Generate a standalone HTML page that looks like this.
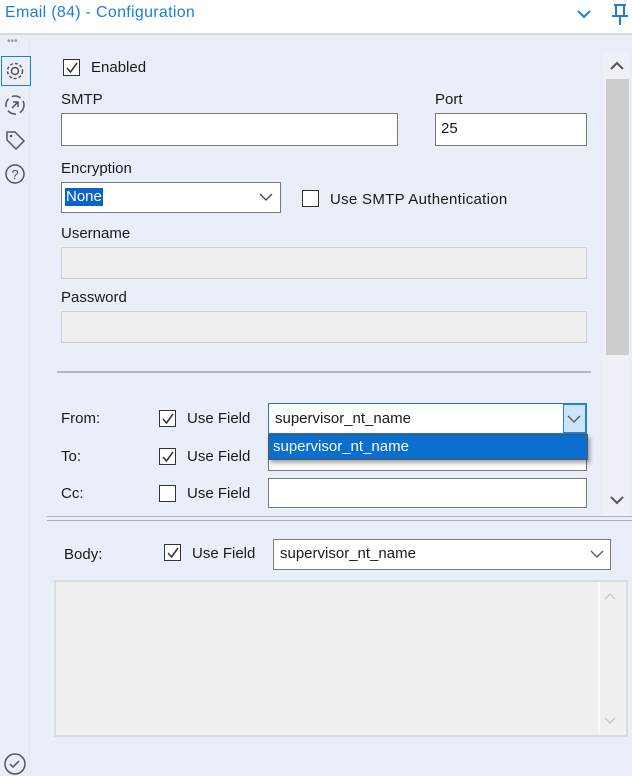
<!DOCTYPE html>
<html><head><style>
*{box-sizing:border-box;margin:0;padding:0}
body{width:632px;height:772px;background:#e9eef8;font-family:"Liberation Sans",sans-serif;font-size:15px;color:#1a1a1a;position:relative;overflow:hidden}
.a{position:absolute}
.t{position:absolute;white-space:nowrap;line-height:18px}
.in{position:absolute;background:#fff;border:1px solid #7a7a7a}
.dis{position:absolute;background:#f0f0f0;border:1px solid #cfcfcf}
.cb{position:absolute;width:17px;height:17px;border:1px solid #333;background:#fff}
.cb svg{position:absolute;left:1px;top:1px}
</style></head><body>
<div class="a" style="left:0;top:0;width:632px;height:35px;background:#fff;border-bottom:2px solid #d6d9de"></div>
<div class="t" style="left:5px;top:4px;color:#1c7ed6;font-size:16px;letter-spacing:0.3px">Email (84) - Configuration</div>
<svg class="a" style="left:576px;top:8px" width="16" height="12"><path d="M2 3l6 6 6-6" stroke="#1c7ed6" stroke-width="2" fill="none"/></svg>
<svg class="a" style="left:610px;top:3px" width="20" height="24"><path d="M4 2h12M6 2v10M14 2v10M2 13h16M10 13v9" stroke="#1c7ed6" stroke-width="2" fill="none"/></svg>
<div class="a" style="left:0;top:37px;width:30px;height:735px;background:#e9eef8;border-right:1px solid #e2e7f1"></div>
<div class="t" style="left:7px;top:37px;color:#999;font-size:10px;line-height:10px">•••</div>
<div class="a" style="left:1px;top:56px;width:30px;height:30px;border:1px solid #1c7ed6"></div>
<svg class="a" style="left:4px;top:60px" width="22" height="22"><circle cx="11" cy="11" r="3.5" stroke="#555" stroke-width="1.5" fill="none"/><circle cx="11" cy="11" r="7.5" stroke="#555" stroke-width="1.5" fill="none" stroke-dasharray="3 2"/></svg>
<svg class="a" style="left:4px;top:94px" width="22" height="22"><circle cx="11" cy="11" r="9" stroke="#555" stroke-width="1.5" fill="none" stroke-dasharray="9 4"/><path d="M8 14l6-6M9 8h5v5" stroke="#555" stroke-width="1.5" fill="none"/></svg>
<svg class="a" style="left:4px;top:129px" width="22" height="22"><path d="M3 3h8l9 9-8 8-9-9z" stroke="#555" stroke-width="1.5" fill="none"/><circle cx="7" cy="7" r="1.3" fill="#555"/></svg>
<svg class="a" style="left:4px;top:163px" width="22" height="22"><circle cx="11" cy="11" r="9" stroke="#555" stroke-width="1.5" fill="none"/><text x="11" y="16" text-anchor="middle" font-size="13" font-family="Liberation Sans" fill="#555">?</text></svg>
<svg class="a" style="left:3px;top:752px" width="24" height="24"><circle cx="12" cy="12" r="10" stroke="#555" stroke-width="1.5" fill="none"/><path d="M7 12l3 3 6-6" stroke="#555" stroke-width="1.5" fill="none"/></svg>
<div class="cb" style="left:63px;top:59px"><svg width="14" height="14"><path d="M2 7l3.5 4L12 2" stroke="#333" stroke-width="1.5" fill="none"/></svg></div>
<div class="t" style="left:91px;top:59px">Enabled</div>
<div class="t" style="left:61px;top:91px">SMTP</div>
<div class="in" style="left:61px;top:113px;width:337px;height:33px"></div>
<div class="t" style="left:435px;top:91px">Port</div>
<div class="in" style="left:435px;top:113px;width:152px;height:33px"></div>
<div class="t" style="left:441px;top:120px">25</div>
<div class="t" style="left:61px;top:160px">Encryption</div>
<div class="in" style="left:61px;top:182px;width:220px;height:31px"></div>
<div class="t" style="left:65px;top:188px;background:#0a64c8;color:#fff;padding:0 1px">None</div>
<svg class="a" style="left:259px;top:192px" width="14" height="10"><path d="M1 2l6 6 6-6" stroke="#444" stroke-width="1.3" fill="none"/></svg>
<div class="cb" style="left:302px;top:190px"></div>
<div class="t" style="left:330px;top:191px;letter-spacing:0.3px">Use SMTP Authentication</div>
<div class="t" style="left:61px;top:225px">Username</div>
<div class="dis" style="left:61px;top:247px;width:526px;height:32px"></div>
<div class="t" style="left:61px;top:289px">Password</div>
<div class="dis" style="left:61px;top:311px;width:526px;height:32px"></div>
<div class="a" style="left:57px;top:371px;width:534px;height:2px;background:#b8b8b8"></div>
<div class="a" style="left:603px;top:53px;width:26px;height:462px;background:#eef1f8"></div>
<div class="a" style="left:606px;top:79px;width:23px;height:276px;background:#cdcdcd"></div>
<svg class="a" style="left:609px;top:60px" width="16" height="12"><path d="M2 9l6-6 6 6" stroke="#555" stroke-width="2" fill="none"/></svg>
<svg class="a" style="left:609px;top:494px" width="16" height="12"><path d="M2 3l6 6 6-6" stroke="#555" stroke-width="2" fill="none"/></svg>
<div class="t" style="left:61px;top:410px">From:</div>
<div class="cb" style="left:159px;top:410px"><svg width="14" height="14"><path d="M2 7l3.5 4L12 2" stroke="#333" stroke-width="1.5" fill="none"/></svg></div>
<div class="t" style="left:187px;top:410px">Use Field</div>
<div class="t" style="left:61px;top:448px">To:</div>
<div class="cb" style="left:159px;top:448px"><svg width="14" height="14"><path d="M2 7l3.5 4L12 2" stroke="#333" stroke-width="1.5" fill="none"/></svg></div>
<div class="t" style="left:187px;top:448px">Use Field</div>
<div class="t" style="left:61px;top:485px">Cc:</div>
<div class="cb" style="left:159px;top:485px"></div>
<div class="t" style="left:187px;top:485px">Use Field</div>
<div class="in" style="left:268px;top:441px;width:319px;height:30px"></div>
<div class="in" style="left:268px;top:478px;width:319px;height:30px"></div>
<div class="in" style="left:268px;top:403px;width:319px;height:31px;border-color:#1c7ed6"></div>
<div class="t" style="left:275px;top:410px">supervisor_nt_name</div>
<div class="a" style="left:563px;top:404px;width:23px;height:29px;background:#cce4f7;border:1px solid #2f7cc8"></div>
<svg class="a" style="left:567px;top:414px" width="14" height="10"><path d="M1 2l6 6 6-6" stroke="#555" stroke-width="1.3" fill="none"/></svg>
<div class="a" style="left:268px;top:434px;width:320px;height:26px;background:#0a6fd0;border:1px solid #555;box-shadow:2px 3px 4px rgba(0,0,0,.35)"></div>
<div class="t" style="left:273px;top:438px;color:#fff">supervisor_nt_name</div>
<div class="a" style="left:47px;top:516px;width:585px;height:5px;border-top:1px solid #b0b0b0;border-bottom:1px solid #b0b0b0"></div>
<div class="t" style="left:64px;top:546px">Body:</div>
<div class="cb" style="left:164px;top:544px"><svg width="14" height="14"><path d="M2 7l3.5 4L12 2" stroke="#333" stroke-width="1.5" fill="none"/></svg></div>
<div class="t" style="left:192px;top:545px">Use Field</div>
<div class="in" style="left:273px;top:539px;width:338px;height:31px"></div>
<div class="t" style="left:280px;top:545px">supervisor_nt_name</div>
<svg class="a" style="left:590px;top:549px" width="14" height="10"><path d="M1 2l6 6 6-6" stroke="#555" stroke-width="1.3" fill="none"/></svg>
<div class="a" style="left:54px;top:580px;width:574px;height:157px;background:#f0f0f0;border:2px solid #dcdcdc"></div>
<div class="a" style="left:598px;top:582px;width:2px;height:153px;background:#fafafa"></div>
<svg class="a" style="left:603px;top:591px" width="14" height="10"><path d="M2 8l5-5 5 5" stroke="#c8c8c8" stroke-width="1.5" fill="none"/></svg>
<svg class="a" style="left:603px;top:716px" width="14" height="10"><path d="M2 2l5 5 5-5" stroke="#c8c8c8" stroke-width="1.5" fill="none"/></svg>
</body></html>
